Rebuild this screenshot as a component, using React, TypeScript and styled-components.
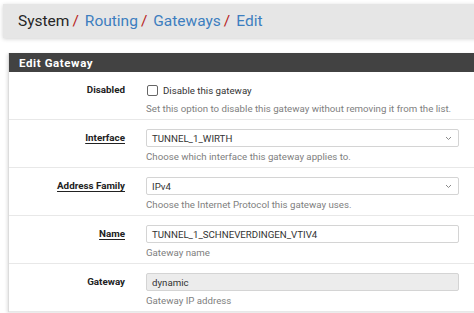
import * as React from 'react';
import styled, { createGlobalStyle } from 'styled-components';

const GlobalStyle = createGlobalStyle`
  html, body {
    margin: 0;
    padding: 0;
    background: #ffffff;
    overflow: hidden;
  }
  body {
    font-family: Roboto, 'Liberation Sans', sans-serif;
  }
`;

const Page = styled.div`
  width: 474px;
  height: 313px;
  padding-top: 4px;
  box-sizing: border-box;
`;

const Breadcrumb = styled.div`
  margin-left: 3px;
  width: 480px;
  height: 34px;
  background: #e6e6e6;
  box-shadow: 0 1px 4px rgba(0, 0, 0, 0.18);
  display: flex;
  align-items: center;
  padding-left: 15px;
  box-sizing: border-box;
  font-size: 15.5px;
  color: #222;
`;

const Crumb = styled.span<{ $link?: boolean }>`
  color: ${({ $link }) => ($link ? '#3d7ebf' : '#262626')};
`;

const Sep = styled.span`
  color: #b71c1c;
  margin: 0 6px 0 3px;
`;

const Panel = styled.div`
  margin: 15px 0 0 8px;
  width: 480px;
  border-left: 1px solid #dcdcdc;
  box-shadow: -1px 1px 3px rgba(0, 0, 0, 0.12);
`;

const PanelHeading = styled.div`
  height: 19px;
  background: #424242;
  color: #ffffff;
  font-weight: 700;
  font-size: 11.5px;
  letter-spacing: 0.6px;
  display: flex;
  align-items: center;
  padding-left: 10px;
`;

const Row = styled.div`
  display: grid;
  grid-template-columns: 116px 313px;
  column-gap: 21px;
  height: 48px;
  box-sizing: border-box;
  border-bottom: 1px solid #e8e8e8;
  padding-top: 9px;
`;

const Label = styled.div<{ $underline?: boolean }>`
  text-align: right;
  font-size: 9.8px;
  font-weight: 700;
  color: #222;
  height: 18px;
  line-height: 18px;

  span {
    text-decoration: ${({ $underline }) => ($underline ? 'underline' : 'none')};
    text-decoration-thickness: 1px;
    text-underline-offset: 2px;
  }
`;

const Field = styled.div`
  display: flex;
  flex-direction: column;
`;

const InputBox = styled.div<{ $disabled?: boolean }>`
  height: 18px;
  box-sizing: border-box;
  border: 1px solid #d4d4d4;
  border-radius: 2px;
  background: ${({ $disabled }) => ($disabled ? '#ececec' : '#ffffff')};
  display: flex;
  align-items: center;
  justify-content: space-between;
  padding: 0 6px 0 5px;
  font-size: 9.7px;
  color: #333;
`;

const CheckLine = styled.label`
  height: 18px;
  display: flex;
  align-items: center;
  gap: 5px;
  font-size: 9.7px;
  color: #333;
`;

const CheckBox = styled.span`
  width: 9px;
  height: 9px;
  border: 1px solid #666;
  border-radius: 2px;
  margin-left: 1px;
`;

const Help = styled.div`
  margin-top: 4px;
  font-size: 9.7px;
  color: #808080;
  line-height: 12px;
  white-space: nowrap;
`;

const Chevron = () => (
  <svg width="7" height="5" viewBox="0 0 7 5">
    <path d="M1 1 L3.5 3.5 L6 1" fill="none" stroke="#888" strokeWidth="1" />
  </svg>
);

const App: React.FC = () => {
  return (
    <Page>
      <GlobalStyle />
      <Breadcrumb>
        <Crumb>System</Crumb>
        <Sep>/</Sep>
        <Crumb $link>Routing</Crumb>
        <Sep>/</Sep>
        <Crumb $link>Gateways</Crumb>
        <Sep>/</Sep>
        <Crumb $link>Edit</Crumb>
      </Breadcrumb>
      <Panel>
        <PanelHeading>Edit Gateway</PanelHeading>
        <Row>
          <Label><span>Disabled</span></Label>
          <Field>
            <CheckLine>
              <CheckBox />
              Disable this gateway
            </CheckLine>
            <Help>Set this option to disable this gateway without removing it from the list.</Help>
          </Field>
        </Row>
        <Row>
          <Label $underline><span>Interface</span></Label>
          <Field>
            <InputBox>
              TUNNEL_1_WIRTH
              <Chevron />
            </InputBox>
            <Help>Choose which interface this gateway applies to.</Help>
          </Field>
        </Row>
        <Row>
          <Label $underline><span>Address Family</span></Label>
          <Field>
            <InputBox>
              IPv4
              <Chevron />
            </InputBox>
            <Help>Choose the Internet Protocol this gateway uses.</Help>
          </Field>
        </Row>
        <Row>
          <Label $underline><span>Name</span></Label>
          <Field>
            <InputBox>TUNNEL_1_SCHNEVERDINGEN_VTIV4</InputBox>
            <Help>Gateway name</Help>
          </Field>
        </Row>
        <Row>
          <Label><span>Gateway</span></Label>
          <Field>
            <InputBox $disabled>dynamic</InputBox>
            <Help>Gateway IP address</Help>
          </Field>
        </Row>
      </Panel>
    </Page>
  );
};

export default App;
